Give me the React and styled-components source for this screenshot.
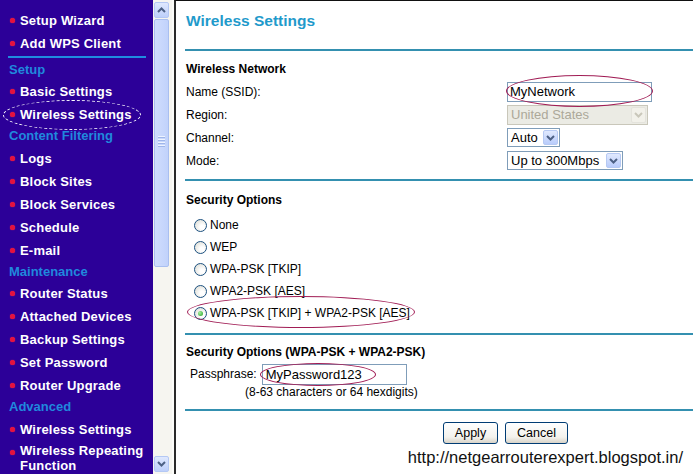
import React from "react";
import styled, { createGlobalStyle } from "styled-components";

const GlobalStyle = createGlobalStyle`
  html, body {
    margin: 0;
    padding: 0;
    background: #ffffff;
  }
  body {
    font-family: "Liberation Sans", Arial, sans-serif;
    font-size: 12px;
    color: #000;
  }
`;

const Page = styled.div`
  display: flex;
  width: 693px;
  height: 474px;
  overflow: hidden;
`;

/* ---------- left menu ---------- */

const Sidebar = styled.nav`
  width: 153px;
  flex: none;
  box-sizing: border-box;
  padding-top: 8.5px;
  background: #2c0098;
`;

const MenuItem = styled.div`
  position: relative;
  min-height: 23px;
  box-sizing: border-box;
  padding: ${(p) => (p.$multi ? "2px 4px 0 20px" : "0 4px 0 20px")};
  display: flex;
  align-items: center;
  line-height: 16px;
  color: #ffffff;
  font: bold 13px "Liberation Sans", Arial, sans-serif;
  letter-spacing: 0.2px;

  &::before {
    content: "";
    position: absolute;
    left: 10px;
    top: 9px;
    width: 5px;
    height: 5px;
    border-radius: 50%;
    background: #e4123e;
    box-shadow: 0 0 1px #ff3050;
  }
`;

const MenuHeading = styled.div`
  height: 20.5px;
  box-sizing: border-box;
  padding: 2px 0 0 9px;
  line-height: 18px;
  color: #2089dd;
  font: bold 13px "Liberation Sans", Arial, sans-serif;
`;

const MenuRule = styled.div`
  height: 2px;
  margin: 1.5px 7px 1.5px 8px;
  background: #1f8ce0;
`;

/* ---------- scrollbar ---------- */

const ScrollTrack = styled.div`
  width: 21px;
  flex: none;
  box-sizing: border-box;
  display: flex;
  flex-direction: column;
  padding: 2px 3px 2px 1px;
  background: #f6f5f0;
  border-right: 2px solid #fcfcf9;
`;

const ScrollButton = styled.div`
  height: 16px;
  flex: none;
  box-sizing: border-box;
  border: 1px solid #b4c8f4;
  border-radius: 2px;
  background: linear-gradient(#dfe8fe, #bed0fb);
  display: flex;
  align-items: center;
  justify-content: center;
`;

const ScrollThumb = styled.div`
  height: 248px;
  margin-top: 1px;
  flex: none;
  box-sizing: border-box;
  border: 1px solid #a9bff0;
  border-radius: 2px;
  background: linear-gradient(90deg, #d0ddfd, #c1d2fb);
  display: flex;
  flex-direction: column;
  align-items: center;
  padding-top: 116px;
  gap: 2px;
`;

const Grip = styled.span`
  width: 7px;
  height: 1px;
  background: #eef3ff;
  box-shadow: 0 1px 0 #9fb6ea;
`;

const ScrollSpace = styled.div`
  flex: 1;
`;

const Chevron = ({ up, color = "#4d6185" }) => (
  <svg width="9" height="6" viewBox="0 0 9 6">
    <path
      d={up ? "M1 5 L4.5 1.5 L8 5" : "M1 1 L4.5 4.5 L8 1"}
      fill="none"
      stroke={color}
      strokeWidth="2"
    />
  </svg>
);

/* ---------- main form ---------- */

const Main = styled.main`
  flex: 1;
  display: flex;
  flex-direction: column;
  border-top: 1px solid #111;
  border-left: 2px solid #2a2a2a;
  padding-left: 9px;
  background: #ffffff;
`;

const Title = styled.h1`
  margin: 0;
  height: 48px;
  box-sizing: border-box;
  padding: 11px 0 0 1px;
  line-height: 20px;
  font: bold 15.5px "Liberation Sans", Arial, sans-serif;
  color: #1f9acb;
`;

const Rule = styled.div`
  height: 2px;
  background: #3490b0;
`;

const Section = styled.section`
  padding: ${(p) => p.$pad};
  padding-left: 1px;
`;

const Heading = styled.div`
  height: 22px;
  line-height: 22px;
  font-weight: bold;
  font-size: 12px;
`;

const FieldGrid = styled.div`
  display: grid;
  grid-template-columns: 321px auto;
  grid-auto-rows: 23px;
  align-items: center;
`;

const Label = styled.span`
  font-size: 12px;
`;

const Anchor = styled.div`
  position: relative;
  width: max-content;
`;

const TextBox = styled.div`
  box-sizing: border-box;
  width: ${(p) => p.$w}px;
  height: ${(p) => p.$h || 20}px;
  border: 1px solid #7f9db9;
  padding-left: ${(p) => p.$pl || 2}px;
  display: flex;
  align-items: center;
  font-size: 13px;
  background: #fff;
`;

const SelectBox = styled.div`
  box-sizing: border-box;
  width: ${(p) => p.$w}px;
  height: ${(p) => p.$h || 20}px;
  border: 1px solid ${(p) => (p.$disabled ? "#c9c7ba" : "#7f9db9")};
  background: ${(p) => (p.$disabled ? "#ebebe4" : "#ffffff")};
  color: ${(p) => (p.$disabled ? "#aca899" : "#000")};
  padding: 1px 1px 1px 3px;
  display: flex;
  align-items: center;
  font-size: 13px;
`;

const DropButton = styled.span`
  margin-left: auto;
  width: 15px;
  height: 100%;
  box-sizing: border-box;
  border: 1px solid ${(p) => (p.$disabled ? "#e4e3dc" : "#b6c9f3")};
  border-radius: 2px;
  background: ${(p) =>
    p.$disabled ? "#f2f1ea" : "linear-gradient(#e0e9fe, #b9ccfb)"};
  display: flex;
  align-items: center;
  justify-content: center;
`;

const Select = ({ w, h, disabled, children }) => (
  <SelectBox $w={w} $h={h} $disabled={disabled}>
    {children}
    <DropButton $disabled={disabled}>
      <Chevron color={disabled ? "#c9c7ba" : "#4d6185"} />
    </DropButton>
  </SelectBox>
);

const RadioList = styled.div`
  margin-top: 3px;
  display: flex;
  flex-direction: column;
`;

const RadioRow = styled.label`
  position: relative;
  height: 22px;
  padding-left: 8px;
  display: flex;
  align-items: center;
  gap: 3px;
  font-size: 12px;
`;

const RadioDot = styled.span`
  width: 13px;
  height: 13px;
  box-sizing: border-box;
  border-radius: 50%;
  border: 1px solid #1c5180;
  background: radial-gradient(circle at 65% 65%, #ffffff 20%, #dcdcd4 90%);
  display: flex;
  align-items: center;
  justify-content: center;

  &::after {
    content: "";
    display: ${(p) => (p.$checked ? "block" : "none")};
    width: 5px;
    height: 5px;
    border-radius: 50%;
    background: radial-gradient(circle at 35% 35%, #a6f0a0, #21a121);
  }
`;

const PassRow = styled.div`
  height: 22px;
  padding-left: 4px;
  display: flex;
  align-items: center;
  gap: 5px;
  font-size: 12px;
`;

const Hint = styled.div`
  height: 14px;
  line-height: 14px;
  padding-left: 59px;
  font-size: 12px;
`;

const Buttons = styled.div`
  margin-top: 11px;
  padding-left: 258px;
  display: flex;
  gap: 7px;
`;

const Button = styled.button`
  height: 22px;
  min-width: ${(p) => p.$w}px;
  padding: 0 6px;
  border: 1px solid #003c74;
  border-radius: 3px;
  background: linear-gradient(#ffffff, #f3f2ed 70%, #d8d3c8);
  font: 12.5px "Liberation Sans", Arial, sans-serif;
  color: #000;
`;

const Url = styled.div`
  margin-top: 4px;
  line-height: 20px;
  text-align: right;
  padding-right: 10px;
  font: 16.5px "Liberation Sans", Arial, sans-serif;
  color: #111;
`;

const Ring = styled.span`
  position: absolute;
  pointer-events: none;
  box-sizing: border-box;
  border-radius: 50%;
  border: 1px ${(p) => (p.$dashed ? "dashed" : "solid")}
    ${(p) => p.$color || "#a11d55"};
  left: ${(p) => p.$l}px;
  top: ${(p) => p.$t}px;
  width: ${(p) => p.$w}px;
  height: ${(p) => p.$h}px;
`;

const menu = [
  { t: "item", label: "Setup Wizard" },
  { t: "item", label: "Add WPS Client" },
  { t: "rule" },
  { t: "head", label: "Setup" },
  { t: "item", label: "Basic Settings" },
  { t: "item", label: "Wireless Settings", ring: true },
  { t: "head", label: "Content Filtering" },
  { t: "item", label: "Logs" },
  { t: "item", label: "Block Sites" },
  { t: "item", label: "Block Services" },
  { t: "item", label: "Schedule" },
  { t: "item", label: "E-mail" },
  { t: "head", label: "Maintenance" },
  { t: "item", label: "Router Status" },
  { t: "item", label: "Attached Devices" },
  { t: "item", label: "Backup Settings" },
  { t: "item", label: "Set Password" },
  { t: "item", label: "Router Upgrade" },
  { t: "head", label: "Advanced" },
  { t: "item", label: "Wireless Settings" },
  { t: "item", label: "Wireless Repeating Function", multi: true },
];

const securityModes = [
  "None",
  "WEP",
  "WPA-PSK [TKIP]",
  "WPA2-PSK [AES]",
  "WPA-PSK [TKIP] + WPA2-PSK [AES]",
];

export default function App() {
  return (
    <>
      <GlobalStyle />
      <Page>
        <Sidebar>
          {menu.map((m, i) => {
            if (m.t === "rule") return <MenuRule key={i} />;
            if (m.t === "head") return <MenuHeading key={i}>{m.label}</MenuHeading>;
            return (
              <MenuItem key={i} $multi={m.multi}>
                {m.label}
                {m.ring && <Ring $dashed $color="#ffffff" $l={3} $t={-3.5} $w={138} $h={30} />}
              </MenuItem>
            );
          })}
        </Sidebar>

        <ScrollTrack>
          <ScrollButton>
            <Chevron up />
          </ScrollButton>
          <ScrollThumb>
            <Grip />
            <Grip />
            <Grip />
            <Grip />
          </ScrollThumb>
          <ScrollSpace />
          <ScrollButton>
            <Chevron />
          </ScrollButton>
        </ScrollTrack>

        <Main>
          <Title>Wireless Settings</Title>
          <Rule />

          <Section $pad="7px 0 7px">
            <Heading>Wireless Network</Heading>
            <FieldGrid>
              <Label>Name (SSID):</Label>
              <Anchor>
                <TextBox $w={145}>MyNetwork</TextBox>
                <Ring $l={-1} $t={-7} $w={147} $h={32} />
              </Anchor>
              <Label>Region:</Label>
              <Select w={141} disabled>
                United States
              </Select>
              <Label>Channel:</Label>
              <Select w={53} h={19}>
                Auto
              </Select>
              <Label>Mode:</Label>
              <Select w={116} h={19}>
                Up to 300Mbps
              </Select>
            </FieldGrid>
          </Section>
          <Rule />

          <Section $pad="8px 0 9px">
            <Heading>Security Options</Heading>
            <RadioList>
              {securityModes.map((mode, i) => {
                const last = i === securityModes.length - 1;
                return (
                  <RadioRow key={mode}>
                    <RadioDot $checked={last} />
                    {mode}
                    {last && <Ring $l={1} $t={-6} $w={228} $h={32} />}
                  </RadioRow>
                );
              })}
            </RadioList>
          </Section>
          <Rule />

          <Section $pad="6px 0 10px">
            <Heading>Security Options (WPA-PSK + WPA2-PSK)</Heading>
            <PassRow>
              Passphrase:
              <Anchor>
                <TextBox $w={145} $h={21} $pl={3}>
                  MyPassword123
                </TextBox>
                <Ring $l={-2} $t={-1} $w={116} $h={23} />
              </Anchor>
            </PassRow>
            <Hint>(8-63 characters or 64 hexdigits)</Hint>
          </Section>
          <Rule />

          <Buttons>
            <Button $w={55}>Apply</Button>
            <Button $w={63}>Cancel</Button>
          </Buttons>
          <Url>http://netgearrouterexpert.blogspot.in/</Url>
        </Main>
      </Page>
    </>
  );
}
